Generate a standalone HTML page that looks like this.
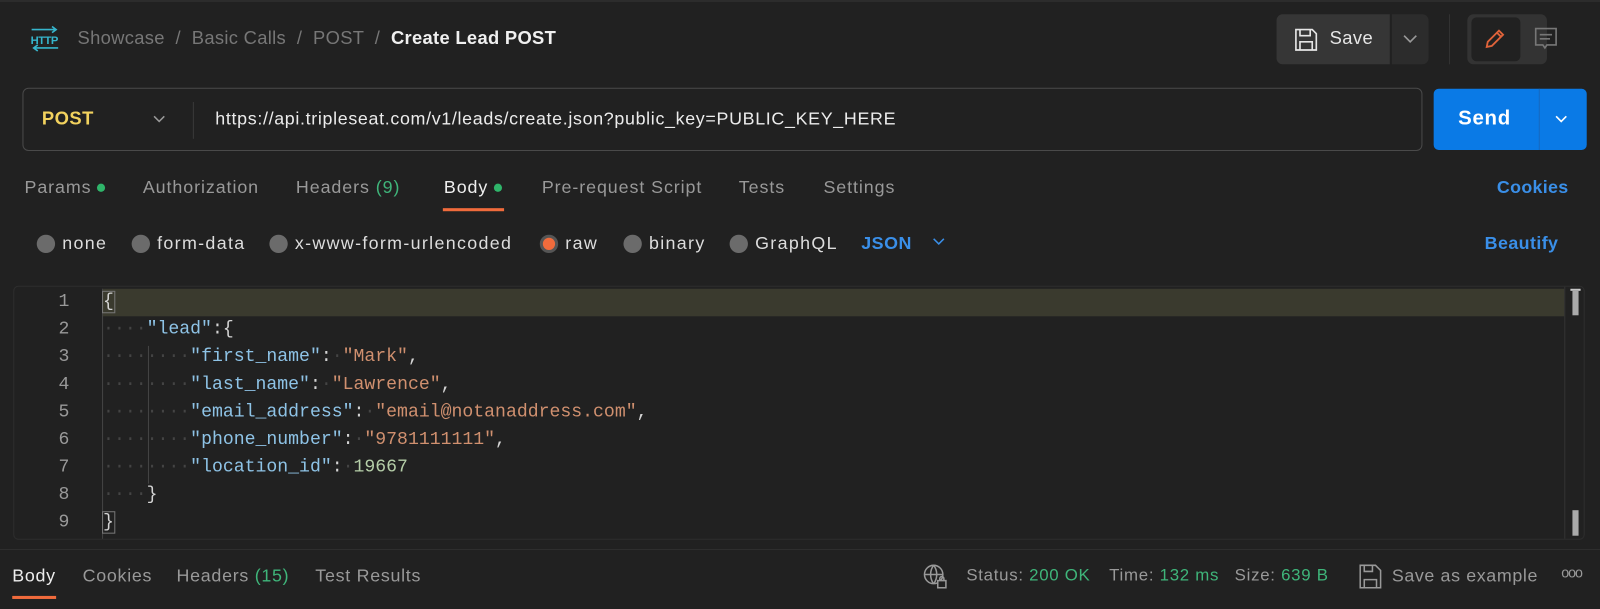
<!DOCTYPE html>
<html><head><meta charset="utf-8"><style>
*{box-sizing:border-box;margin:0;padding:0}
body{width:1600px;height:609px;background:#212121;font-family:"Liberation Sans",sans-serif;color:#a6a6a6;position:relative;overflow:hidden}
#w{position:absolute;left:0;top:0;width:1568px;height:597px;transform:scale(1.0204);transform-origin:0 0}
.a{position:absolute;white-space:nowrap}
.code{font-family:"Liberation Mono",monospace;font-size:17.8px}
.k{color:#8ec3e6}
.s{color:#d0906f}
.n{color:#b5cea8}
.dot{color:#444}
.dotg{display:inline-block;width:8px;height:8px;border-radius:50%;background:#2fb56a;margin-left:5px;vertical-align:middle}
.r{display:inline-block;width:18px;height:18px;border-radius:50%;background:#6b6b6b;vertical-align:middle;margin-right:8px}
.t{letter-spacing:0.9px}
.rd{letter-spacing:1.3px}
.rd .r{margin-right:7px}
.bt{letter-spacing:0.7px}
</style></head><body><div id="w">
<div class="a" style="left:0;top:0;width:1600px;height:2px;background:#2c2c2c"></div>
<svg class="a" style="left:29px;top:25px" width="30" height="26" viewBox="0 0 30 26" fill="none" stroke="#36b5cc" stroke-width="1.6"><path d="M2 4h24M22 1l4 3-4 3"/><path d="M4 22h24M8 19l-4 3 4 3"/><text x="1" y="18" font-family="Liberation Sans" font-size="11" font-weight="bold" fill="#36b5cc" stroke="none" letter-spacing="-0.5">HTTP</text></svg>
<div class="a" style="left:76px;top:27px;font-size:18px;color:#777;letter-spacing:0.3px">Showcase &nbsp;/&nbsp; Basic Calls &nbsp;/&nbsp; POST &nbsp;/&nbsp; <span style="color:#f0f0f0;font-weight:bold">Create Lead POST</span></div>
<div class="a" style="left:1251px;top:14px;width:111px;height:49px;background:#363636;border-radius:6px 0 0 6px"></div>
<svg class="a" style="left:1268px;top:27px" width="24" height="24" viewBox="0 0 24 24" fill="none" stroke="#e6e6e6" stroke-width="1.6"><path d="M2 2h16l4 4v16H2z"/><path d="M6 2v6h10V2"/><path d="M6 22v-8h12v8"/></svg>
<div class="a" style="left:1303px;top:27px;font-size:18px;color:#e6e6e6;letter-spacing:0.4px">Save</div>
<div class="a" style="left:1364px;top:14px;width:36px;height:49px;background:#2c2c2c;border-radius:0 6px 6px 0"></div>
<svg class="a" style="left:1374px;top:33px" width="16" height="10" viewBox="0 0 16 10" fill="none" stroke="#999" stroke-width="1.6"><path d="M2 2l6 6 6-6"/></svg>
<div class="a" style="left:1420px;top:14px;width:1px;height:49px;background:#333"></div>
<div class="a" style="left:1438px;top:14px;width:78px;height:49px;background:#333;border-radius:6px"></div>
<div class="a" style="left:1442px;top:17px;width:48px;height:43px;background:#212121;border-radius:5px"></div>
<svg class="a" style="left:1453px;top:26px" width="24" height="24" viewBox="0 0 24 24" fill="none" stroke="#e0633a" stroke-width="1.8"><path d="M4 20l1-5L16 4l4 4L9 19z"/><path d="M14 6l4 4"/></svg>
<svg class="a" style="left:1503px;top:26px" width="24" height="24" viewBox="0 0 24 24" fill="none" stroke="#777" stroke-width="1.6"><path d="M2 2h20v16H13l-2 3-2-3H2z"/><path d="M6 8h12M6 12h10"/></svg>
<div class="a" style="left:22px;top:86px;width:1372px;height:62px;border:1.5px solid #4a4a4a;border-radius:6px"></div>
<div class="a" style="left:41px;top:106px;font-size:18px;font-weight:bold;color:#f2d25e;letter-spacing:0.5px">POST</div>
<svg class="a" style="left:149px;top:112px" width="14" height="9" viewBox="0 0 14 9" fill="none" stroke="#999" stroke-width="1.5"><path d="M2 2l5 5 5-5"/></svg>
<div class="a" style="left:189px;top:100px;width:1px;height:36px;background:#3a3a3a"></div>
<div class="a" style="left:211px;top:106px;font-size:17.5px;color:#ececec;letter-spacing:0.65px">https://api.tripleseat.com/v1/leads/create.json?public_key=PUBLIC_KEY_HERE</div>
<div class="a" style="left:1405px;top:87px;width:150px;height:60px;background:#0a7ae6;border-radius:5px"></div>
<div class="a" style="left:1508px;top:87px;width:1px;height:60px;background:#1668c0"></div>
<div class="a" style="left:1429px;top:105px;font-size:20px;font-weight:bold;color:#fff;letter-spacing:0.7px">Send</div>
<svg class="a" style="left:1523px;top:112px" width="14" height="9" viewBox="0 0 14 9" fill="none" stroke="#fff" stroke-width="1.6"><path d="M2 2l5 5 5-5"/></svg>
<div class="a t" style="left:24px;top:173px;font-size:17.5px;color:#999">Params<span class="dotg"></span></div>
<div class="a t" style="left:140px;top:173px;font-size:17.5px;color:#999">Authorization</div>
<div class="a t" style="left:290px;top:173px;font-size:17.5px;color:#999">Headers <span style="color:#3fb57a">(9)</span></div>
<div class="a t" style="left:435px;top:173px;font-size:17.5px;color:#eee">Body<span class="dotg"></span></div>
<div class="a" style="left:434px;top:204px;width:60px;height:3px;background:#f06b3c"></div>
<div class="a t" style="left:531px;top:173px;font-size:17.5px;color:#999">Pre-request Script</div>
<div class="a t" style="left:724px;top:173px;font-size:17.5px;color:#999">Tests</div>
<div class="a t" style="left:807px;top:173px;font-size:17.5px;color:#999">Settings</div>
<div class="a" style="left:1467px;top:173px;font-size:17.5px;color:#3a8fe8;font-weight:bold;letter-spacing:0.3px">Cookies</div>
<div class="a rd" style="left:36px;top:228px;font-size:17.5px;color:#ddd"><span class="r"></span>none</div>
<div class="a rd" style="left:129px;top:228px;font-size:17.5px;color:#ddd"><span class="r"></span>form-data</div>
<div class="a rd" style="left:264px;top:228px;font-size:17.5px;color:#ddd"><span class="r"></span>x-www-form-urlencoded</div>
<div class="a rd" style="left:529px;top:228px;font-size:17.5px;color:#ddd"><span class="r" style="background:#f06b3c;border:3px solid #555"></span>raw</div>
<div class="a rd" style="left:611px;top:228px;font-size:17.5px;color:#ddd"><span class="r"></span>binary</div>
<div class="a rd" style="left:715px;top:228px;font-size:17.5px;color:#ddd"><span class="r"></span>GraphQL</div>
<div class="a" style="left:844px;top:228px;font-size:17.5px;color:#3a8fe8;font-weight:bold;letter-spacing:0.5px">JSON</div>
<svg class="a" style="left:913px;top:232px" width="14" height="9" viewBox="0 0 14 9" fill="none" stroke="#3a8fe8" stroke-width="1.5"><path d="M2 2l5 5 5-5"/></svg>
<div class="a" style="left:1455px;top:228px;font-size:17.5px;color:#3a8fe8;font-weight:bold;letter-spacing:0.4px">Beautify</div>
<div class="a" style="left:13px;top:280px;width:1540px;height:249px;border:1px solid #2e2e2e;border-radius:5px"></div>
<div class="a" style="left:100px;top:283px;width:1433px;height:27px;background:#3a3a2e"></div>
<div class="a" style="left:1533px;top:281px;width:1px;height:247px;background:#333"></div>
<div class="a" style="left:1539px;top:283px;width:10px;height:2px;background:#ccc"></div>
<div class="a" style="left:1541px;top:284px;width:6px;height:25px;background:#aaa"></div>
<div class="a" style="left:1541px;top:500px;width:6px;height:25px;background:#aaa"></div>
<div class="a" style="left:100px;top:283px;width:1px;height:245px;background:#444"></div>
<div class="a" style="left:145px;top:339px;width:1px;height:135px;background:#444"></div>
<div class="a code" style="left:40px;top:283px;line-height:27px;color:#999;text-align:right;width:28px">1<br>2<br>3<br>4<br>5<br>6<br>7<br>8<br>9</div>
<div class="a code" style="left:101px;top:283px;line-height:27px;color:#d4d4d4"><span style="outline:1px solid #777">{</span><br><span class="dot">····</span><span class="k">"lead"</span>:{<br><span class="dot">········</span><span class="k">"first_name"</span>:<span class="dot">·</span><span class="s">"Mark"</span>,<br><span class="dot">········</span><span class="k">"last_name"</span>:<span class="dot">·</span><span class="s">"Lawrence"</span>,<br><span class="dot">········</span><span class="k">"email_address"</span>:<span class="dot">·</span><span class="s">"email@notanaddress.com"</span>,<br><span class="dot">········</span><span class="k">"phone_number"</span>:<span class="dot">·</span><span class="s">"9781111111"</span>,<br><span class="dot">········</span><span class="k">"location_id"</span>:<span class="dot">·</span><span class="n">19667</span><br><span class="dot">····</span>}<br><span style="outline:1px solid #777">}</span></div>
<div class="a" style="left:0;top:538px;width:1600px;height:1px;background:#2e2e2e"></div>
<div class="a bt" style="left:12px;top:554px;font-size:17.5px;color:#eee">Body</div>
<div class="a" style="left:12px;top:584px;width:43px;height:3px;background:#f06b3c"></div>
<div class="a bt" style="left:81px;top:554px;font-size:17.5px;color:#999">Cookies</div>
<div class="a bt" style="left:173px;top:554px;font-size:17.5px;color:#999">Headers <span style="color:#3fb57a">(15)</span></div>
<div class="a bt" style="left:309px;top:554px;font-size:17.5px;color:#999">Test Results</div>
<svg class="a" style="left:904px;top:552px" width="26" height="26" viewBox="0 0 26 26" fill="none" stroke="#999" stroke-width="1.5"><circle cx="11" cy="11" r="9"/><path d="M2 11h18M11 2c-4 5-4 13 0 18M11 2c4 5 4 13 0 18"/><rect x="15" y="17" width="8" height="7" fill="#212121"/><path d="M17 17v-2a2 2 0 014 0v2"/></svg>
<div class="a bt" style="left:947px;top:555px;font-size:16.5px;color:#999">Status: <span style="color:#3fb57a">200 OK</span></div>
<div class="a bt" style="left:1087px;top:555px;font-size:16.5px;color:#999">Time: <span style="color:#3fb57a">132 ms</span></div>
<div class="a bt" style="left:1210px;top:555px;font-size:16.5px;color:#999">Size: <span style="color:#3fb57a">639 B</span></div>
<svg class="a" style="left:1332px;top:553px" width="22" height="24" viewBox="0 0 22 24" fill="none" stroke="#999" stroke-width="1.5"><path d="M1 1h15l5 5v17H1z"/><path d="M5 1v6h8V1"/><path d="M5 23v-8h12v8"/></svg>
<div class="a" style="left:1364px;top:554px;font-size:17.5px;color:#999;letter-spacing:0.6px">Save as example</div>
<div class="a" style="left:1530px;top:553px;font-size:14px;color:#999;letter-spacing:-1px">ooo</div>
</div></body></html>
